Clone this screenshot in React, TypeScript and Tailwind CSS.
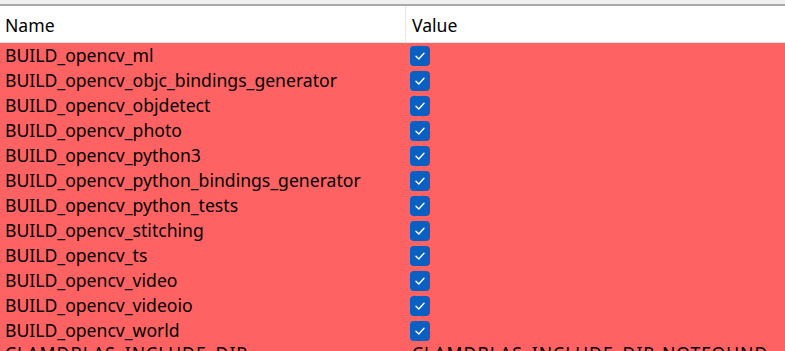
const rows = [
  "BUILD_opencv_ml",
  "BUILD_opencv_objc_bindings_generator",
  "BUILD_opencv_objdetect",
  "BUILD_opencv_photo",
  "BUILD_opencv_python3",
  "BUILD_opencv_python_bindings_generator",
  "BUILD_opencv_python_tests",
  "BUILD_opencv_stitching",
  "BUILD_opencv_ts",
  "BUILD_opencv_video",
  "BUILD_opencv_videoio",
  "BUILD_opencv_world",
]

function Check() {
  return (
    <div className="w-[20px] h-[20px] rounded-[4px] bg-[#0a5fc2] flex items-center justify-center">
      <svg width="12" height="12" viewBox="0 0 12 12" fill="none">
        <path d="M2 6.3 L4.8 9 L10 3.2" stroke="white" strokeWidth="1.4" strokeLinecap="round" strokeLinejoin="round" />
      </svg>
    </div>
  )
}

export default function App() {
  return (
    <div className="w-[785px] h-[351px] overflow-hidden bg-white text-black text-[17.6px]" style={{ fontFamily: '"Noto Sans", sans-serif' }}>
      <div className="h-[4px] bg-[#f0f0f0]" />
      <div className="h-[2px] bg-[#a7a9ab]" />
      <div className="grid grid-cols-[405px_1fr] h-[37px] border-b border-[#e3e3e3]">
        <div className="flex items-center pl-[5px] pt-[2px]">Name</div>
        <div className="flex items-center pl-[6px] pt-[2px] border-l border-[#e5e5e5]">Value</div>
      </div>
      <div className="bg-[#ff6262]">
        {rows.map((name) => (
          <div key={name} className="grid grid-cols-[405px_1fr] h-[25px] items-center">
            <div className="pl-[5px] leading-none">{name}</div>
            <div className="pl-[5px]">
              <Check />
            </div>
          </div>
        ))}
        <div className="grid grid-cols-[405px_1fr] h-[25px] items-start pt-[2px] tracking-[1px]">
          <div className="pl-[5px] leading-none">CLAMDBLAS_INCLUDE_DIR</div>
          <div className="pl-[7px] leading-none">CLAMDBLAS_INCLUDE_DIR-NOTFOUND</div>
        </div>
      </div>
    </div>
  )
}
